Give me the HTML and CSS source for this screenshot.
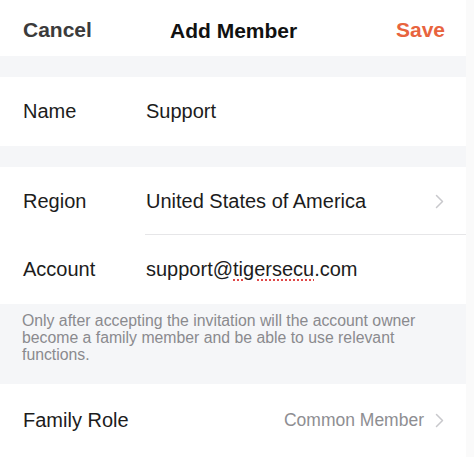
FILE: index.html
```html
<!DOCTYPE html>
<html>
<head>
<meta charset="utf-8">
<link rel="stylesheet" href="styles.css">
</head>
<body>
<div class="page">
  <header class="nav">
    <span class="nav-cancel">Cancel</span>
    <span class="nav-title">Add Member</span>
    <span class="nav-save">Save</span>
  </header>
  <div class="gap"></div>
  <div class="row">
    <span class="label">Name</span>
    <span class="value">Support</span>
  </div>
  <div class="gap"></div>
  <div class="group">
    <div class="row row-sep">
      <span class="label">Region</span>
      <span class="value">United States of America</span>
      <svg class="chev" width="9" height="15" viewBox="0 0 9 15"><path d="M1.5 1.5 L7.5 7.5 L1.5 13.5" fill="none" stroke="#c8c8cc" stroke-width="1.5" stroke-linecap="round" stroke-linejoin="round"/></svg>
    </div>
    <div class="row">
      <span class="label">Account</span>
      <span class="value">support@<span class="spell">tigersecu</span>.com</span>
    </div>
  </div>
  <div class="info">Only after accepting the invitation will the account owner become a family member and be able to use relevant functions.</div>
  <div class="row row-role">
    <span class="label">Family Role</span>
    <span class="role-value">Common Member</span>
    <svg class="chev" width="9" height="15" viewBox="0 0 9 15"><path d="M1.5 1.5 L7.5 7.5 L1.5 13.5" fill="none" stroke="#c8c8cc" stroke-width="1.5" stroke-linecap="round" stroke-linejoin="round"/></svg>
  </div>
</div>
</body>
</html>
```
FILE: styles.css
```css
html, body {
  margin: 0;
  padding: 0;
}
body {
  background: #fafafa;
  font-family: "Liberation Sans", Arial, sans-serif;
  width: 474px;
  height: 457px;
  overflow: hidden;
}
.page {
  width: 466px;
  background: #ffffff;
  height: 457px;
}
.nav {
  height: 56px;
  box-sizing: border-box;
  padding: 4px 21px 0 23px;
  display: flex;
  align-items: center;
  justify-content: space-between;
  font-size: 21px;
  font-weight: bold;
  position: relative;
}
.nav-cancel { color: #3b3b3b; }
.nav-title { color: #111111; position: absolute; left: 170px; top: 19px; }
.nav-save { color: #e8643e; }
.gap {
  height: 21px;
  background: #f5f6f8;
}
.row {
  height: 69px;
  display: flex;
  align-items: center;
  padding-left: 23px;
  font-size: 20px;
  color: #1c1c1c;
}
.label {
  width: 123px;
  flex: none;
}
.value {
  flex: 1;
}
.spell {
  text-decoration: underline dotted #e04848;
  text-decoration-thickness: 2px;
  text-underline-offset: 3px;
}
.chev {
  margin-right: 22px;
  flex: none;
}
.row-sep {
  position: relative;
  height: 68px;
}
.row-sep::after {
  content: "";
  position: absolute;
  left: 145px;
  right: 0;
  bottom: 0;
  height: 1px;
  background: #e6e6e8;
}
.info {
  background: #f5f6f8;
  color: #8a8a8e;
  font-size: 15.8px;
  line-height: 17px;
  padding: 8px 30px 21px 22px;
  height: 51px;
}
.row-role {
  height: 73px;
}
.label-role {
  font-size: 19.5px;
}
.role-value {
  flex: 1;
  text-align: right;
  font-size: 17.5px;
  color: #8e8e92;
  margin-right: 11px;
}
```
